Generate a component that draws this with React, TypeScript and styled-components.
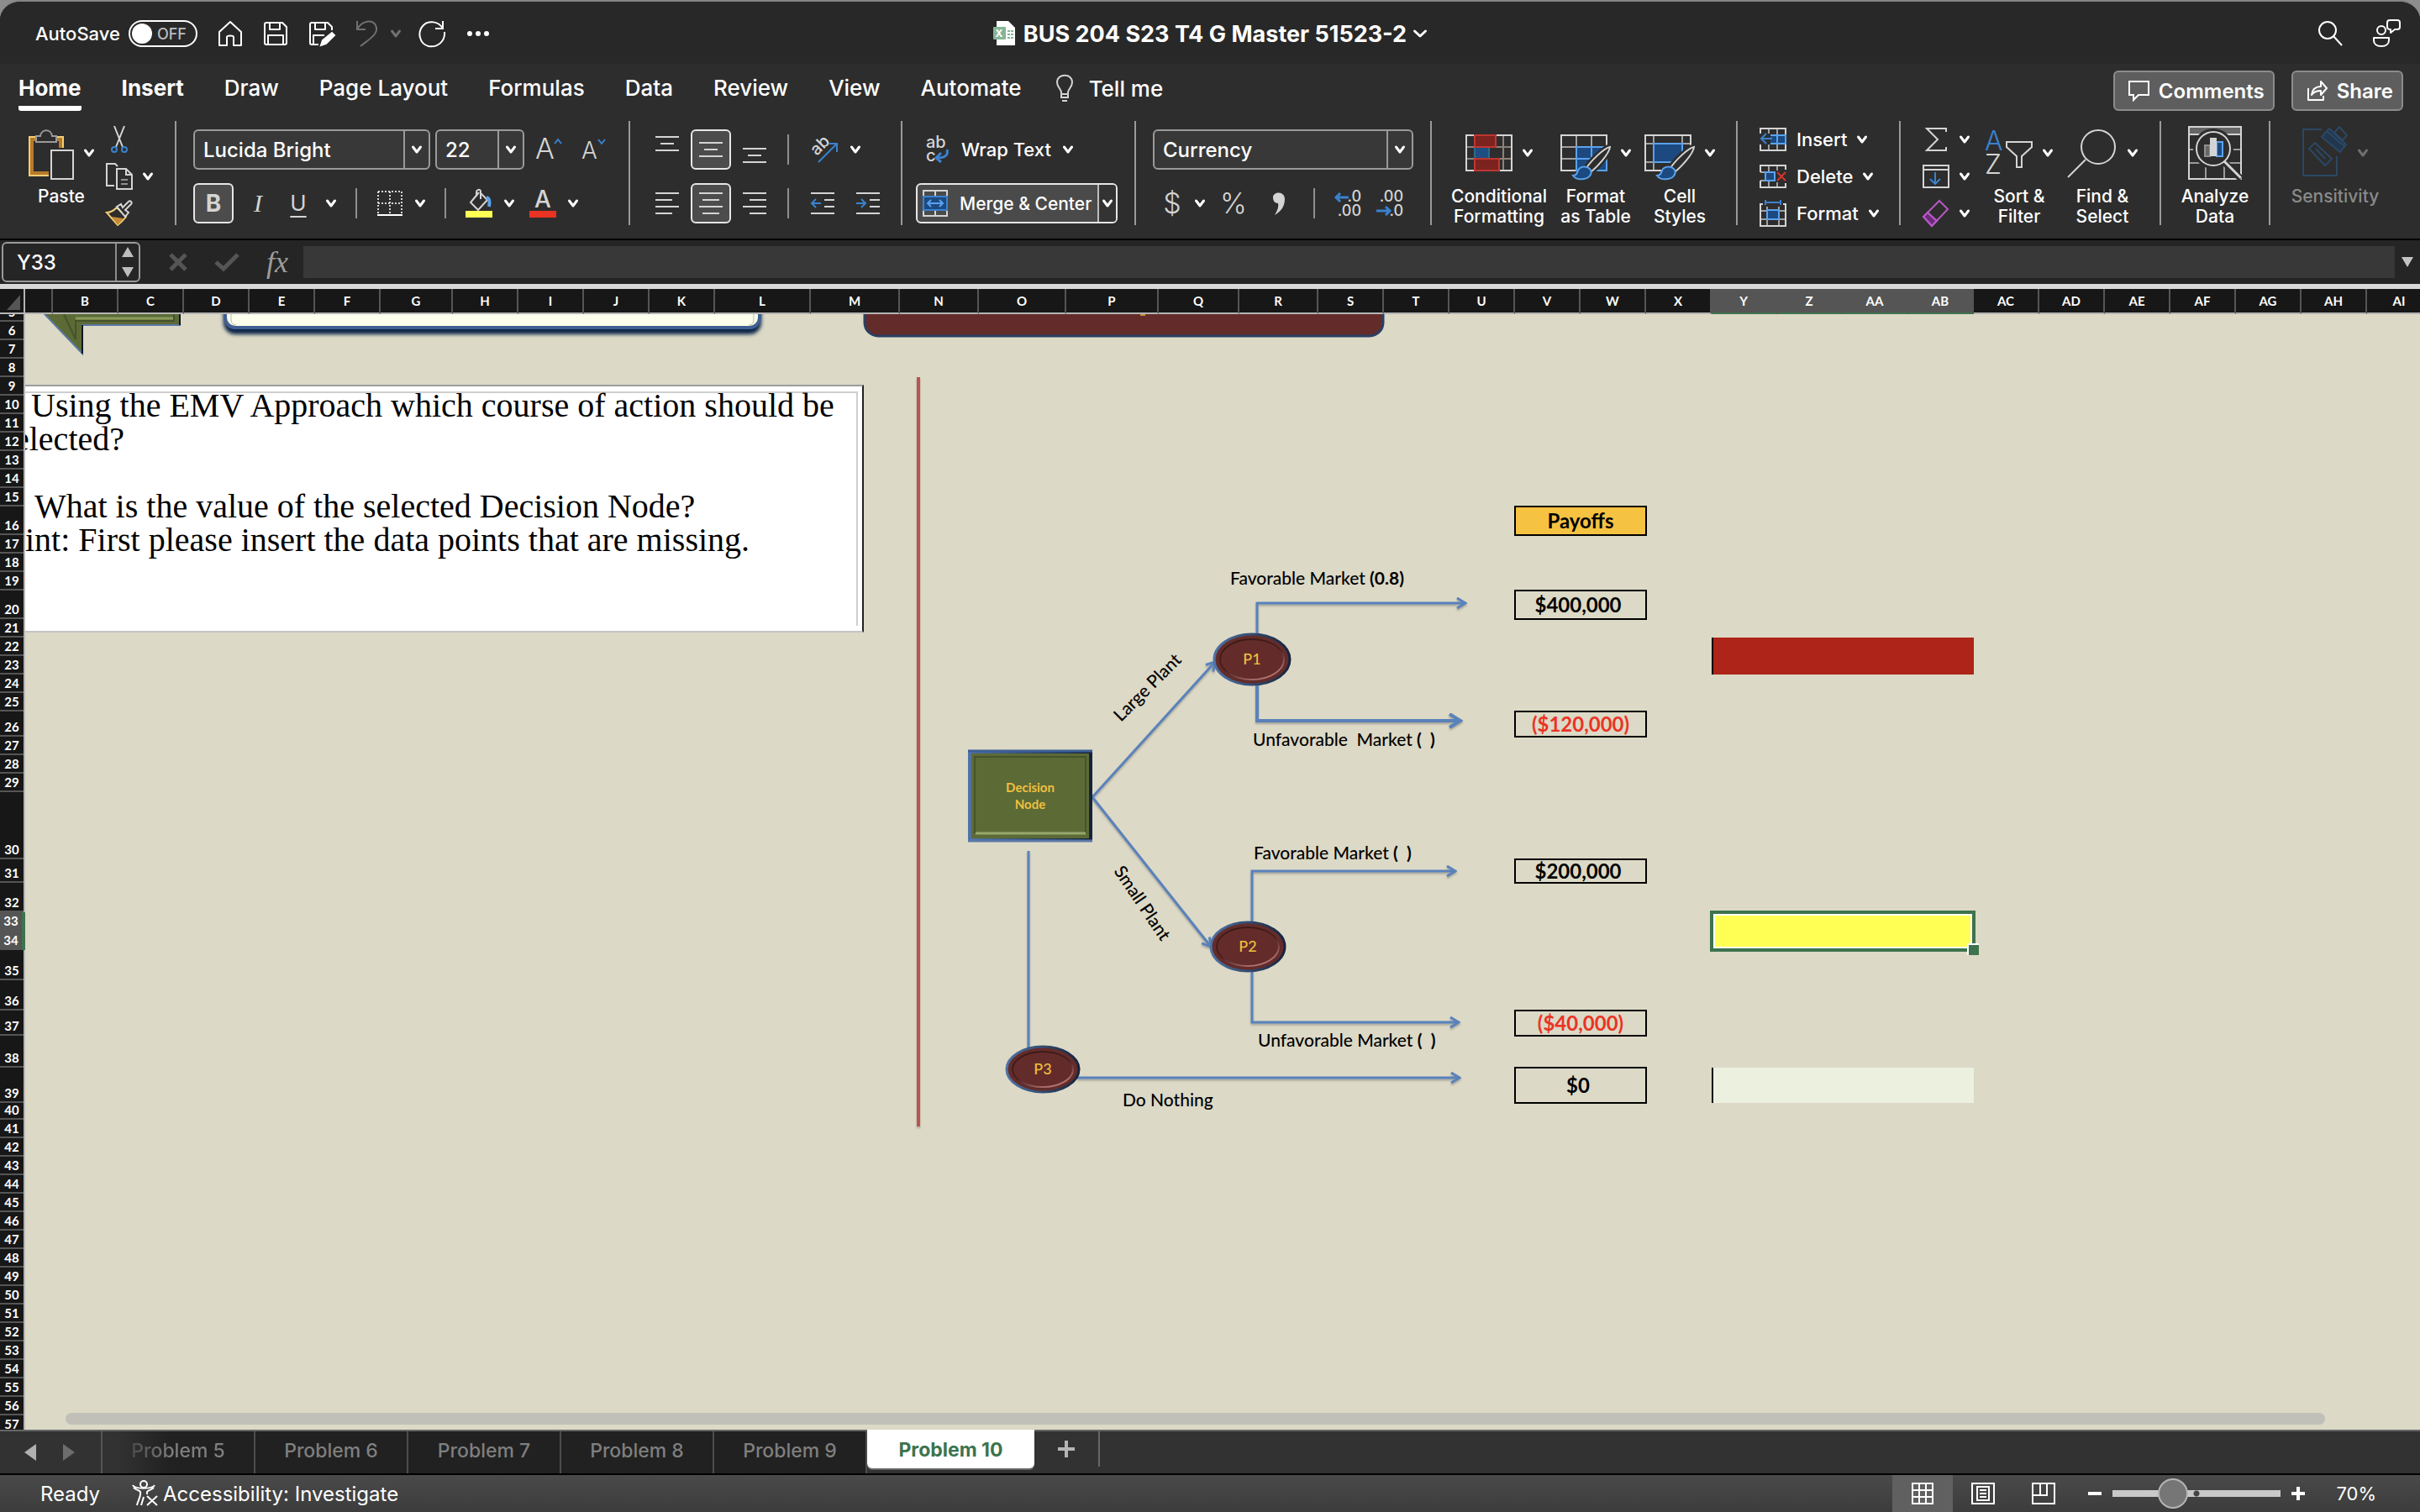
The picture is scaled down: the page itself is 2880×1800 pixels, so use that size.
import React from "react";
import styled, { createGlobalStyle, css } from "styled-components";

const ui = `Inter, "Liberation Sans", sans-serif`;
const sheetFont = `Lato, "Open Sans", sans-serif`;
const c = {
  bar: "#2d2d2d",
  line: "#d4d4d4",
  dim: "#8f8f8f",
  blue: "#3b82cf",
  light: "#5aa2ee",
  navy: "#1c4a80",
  green: "#3d734d",
  paper: "#dcd9c6",
  arrow: "#5a82bb",
};

const Global = createGlobalStyle`
  * { box-sizing: border-box; }
  html, body, #root { height: 100%; margin: 0; }
  body { background: #8d8d8d; font-family: ${ui}; color: #fff; overflow: hidden; }
  button, input, select { font: inherit; color: inherit; margin: 0; padding: 0; border: 0; background: none; }
  svg { display: block; flex: none; overflow: visible; }
`;

/* ---------- window and title bar ---------- */

const Window = styled.div`
  height: 100vh;
  display: flex;
  flex-direction: column;
  background: ${c.bar};
  border-top: 2px solid #848484;
  border-radius: 24px 24px 0 0;
  overflow: hidden;
`;
const TitleBar = styled.header`
  height: 74px;
  display: grid;
  grid-template-columns: 1fr auto 1fr;
  align-items: center;
  padding: 2px 22px 0;
  background: #282828;
`;
const TitleSide = styled.div<{ $end?: boolean }>`
  display: flex;
  align-items: center;
  gap: ${(p) => (p.$end ? 36 : 24)}px;
  padding-left: 20px;
  justify-content: ${(p) => (p.$end ? "flex-end" : "flex-start")};
`;
const AutoSave = styled.label`
  display: flex;
  align-items: center;
  gap: 10px;
  font-size: 22px;
  font-weight: 500;
`;
const Switch = styled.span`
  position: relative;
  display: flex;
  align-items: center;
  width: 82px;
  height: 32px;
  border: 2px solid #fff;
  border-radius: 16px;
  padding-left: 32px;
  font-size: 18px;
  color: #bdbdbd;
  &::before {
    content: "";
    position: absolute;
    left: 2px;
    top: 2px;
    width: 24px;
    height: 24px;
    border-radius: 50%;
    background: #fff;
  }
  input { position: absolute; inset: 0; opacity: 0; }
`;
const PlainButton = styled.button`
  display: flex;
  align-items: center;
`;
const UndoPair = styled.div`
  display: flex;
  align-items: center;
  gap: 14px;
  margin-right: -4px;
`;
const DocTitle = styled.h1`
  display: flex;
  align-items: center;
  gap: 8px;
  margin: 0;
  font-size: 27px;
  font-weight: 700;
`;

/* ---------- ribbon ---------- */

const TabStrip = styled.nav`
  height: 68px;
  display: flex;
  align-items: flex-start;
  gap: 48px;
  padding: 2px 20px 0 22px;
`;
const RibbonTab = styled.button<{ $active?: boolean; $strong?: boolean }>`
  height: 54px;
  padding-top: 4px;
  font-size: 26px;
  font-weight: ${(p) => (p.$strong ? 700 : 500)};
  border-bottom: 6px solid ${(p) => (p.$active ? "#fff" : "transparent")};
  border-radius: 3px;
  white-space: nowrap;
`;
const TellMe = styled.button`
  display: flex;
  align-items: center;
  gap: 18px;
  height: 54px;
  margin-left: -8px;
  font-size: 26px;
  font-weight: 500;
`;
const TabActions = styled.div`
  display: flex;
  gap: 20px;
  margin-left: auto;
  padding-top: 6px;
`;
const ActionButton = styled.button`
  display: flex;
  align-items: center;
  gap: 10px;
  height: 48px;
  padding: 0 10px 0 16px;
  border: 2px solid #8c8c8c;
  border-radius: 6px;
  background: #5e5e5e;
  font-size: 24px;
  font-weight: 600;
`;
const Ribbon = styled.section`
  display: flex;
  height: 142px;
  flex: none;
  border-bottom: 2px solid #000;
`;
const Group = styled.div<{ $w: number; $pad?: number; $last?: boolean }>`
  display: flex;
  flex: none;
  width: ${(p) => p.$w}px;
  height: 124px;
  padding-left: ${(p) => p.$pad ?? 20}px;
  border-right: ${(p) => (p.$last ? 0 : 2)}px solid #9a9a9a;
`;
const Rows = styled.div`
  display: flex;
  flex-direction: column;
  gap: 16px;
  padding-top: 10px;
`;
const ToolRow = styled.div<{ $gap?: number; $pad?: number }>`
  display: flex;
  align-items: center;
  height: 48px;
  gap: ${(p) => p.$gap ?? 18}px;
  padding-left: ${(p) => p.$pad ?? 0}px;
`;
const Tight = styled.div`
  display: flex;
  gap: 6px;
`;
const ThinSep = styled.i<{ $m?: number }>`
  width: 2px;
  height: 36px;
  margin: 0 ${(p) => p.$m ?? 5}px;
  background: ${c.dim};
`;
const Tool = styled.button<{ $on?: boolean }>`
  display: flex;
  align-items: center;
  justify-content: center;
  gap: 14px;
  flex: none;
  font-size: 22px;
  font-weight: 500;
  white-space: nowrap;
  ${(p) =>
    p.$on &&
    css`
      width: 48px;
      height: 48px;
      && { background: #4c4c4c; border: 2px solid #e6e6e6; }
      border-radius: 6px;
    `}
`;
const Glyph = styled.span<{ $w: number; $kind: "b" | "i" | "u" | "n" }>`
  width: ${(p) => p.$w}px;
  text-align: center;
  color: ${c.line};
  font-size: 28px;
  line-height: 32px;
  font-weight: ${(p) => (p.$kind === "b" ? 700 : 400)};
  ${(p) => p.$kind === "i" && css`font-family: "Liberation Serif", serif; font-style: italic; font-size: 30px;`}
  ${(p) => p.$kind === "u" && css`text-decoration: underline; text-underline-offset: 6px; text-decoration-thickness: 2px; font-size: 26px;`}
  ${(p) => p.$kind === "n" && css`font-size: 34px; font-weight: 300;`}
`;
const SelectBox = styled.label<{ $w: number }>`
  display: flex;
  width: ${(p) => p.$w}px;
  height: 48px;
  border: 2px solid #9a9a9a;
  border-radius: 6px;
  background: #383838;
  select {
    flex: 1;
    min-width: 0;
    appearance: none;
    padding-left: 10px;
    font-size: 24px;
    font-weight: 500;
    border-right: 2px solid #9a9a9a;
  }
  svg { margin: 16px 8px; }
`;
const MergeBox = styled.div`
  display: flex;
  width: 240px;
  height: 48px;
  border: 2px solid #e6e6e6;
  border-radius: 6px;
  background: #4a4a4a;
`;
const MergeMain = styled.button`
  display: flex;
  flex: 1;
  align-items: center;
  gap: 14px;
  padding-left: 6px;
  border-right: 2px solid #bdbdbd;
  font-size: 21px;
  font-weight: 500;
  white-space: nowrap;
`;
const MergeDrop = styled.button`
  width: 20px;
  display: flex;
  align-items: center;
  justify-content: center;
  && { background: #333; }
  border-radius: 0 4px 4px 0;
`;
const Big = styled.button<{ $w: number; $dim?: boolean }>`
  display: flex;
  flex-direction: column;
  align-items: center;
  gap: 8px;
  flex: none;
  width: ${(p) => p.$w}px;
  padding-top: 6px;
  font-size: 21px;
  font-weight: 500;
  line-height: 24px;
  color: ${(p) => (p.$dim ? "#8a8a8a" : "#fff")};
`;
const BigTop = styled.span`
  display: flex;
  align-items: center;
  gap: 12px;
  height: 64px;
`;
const Stack = styled.div<{ $side?: number }>`
  display: flex;
  flex-direction: column;
  gap: 12px;
  align-items: flex-start;
  padding: 6px ${(p) => p.$side ?? 0}px 0 0;
  button { height: 32px; gap: 12px; }
`;

/* ---------- formula bar ---------- */

const FormulaBar = styled.section`
  display: flex;
  align-items: center;
  height: 52px;
  flex: none;
  background: #252525;
`;
const NameBox = styled.label`
  display: flex;
  width: 165px;
  height: 48px;
  margin: 0 34px 0 2px;
  border: 2px solid #9a9a9a;
  border-radius: 6px;
  input {
    flex: 1;
    min-width: 0;
    padding-left: 16px;
    font-size: 24px;
    font-weight: 500;
    border-right: 2px solid #8c8c8c;
  }
  svg { margin: 4px 5px; }
`;
const FormulaButtons = styled.div`
  display: flex;
  align-items: center;
  gap: 32px;
  width: 160px;
  flex: none;
`;
const Fx = styled.span`
  font-family: "Liberation Serif", serif;
  font-style: italic;
  font-size: 36px;
  line-height: 40px;
  color: #9c9c9c;
`;
const FormulaInput = styled.input`
  flex: 1;
  height: 38px;
  && { background: #383838; }
`;
const Expand = styled.button`
  width: 30px;
  display: flex;
  justify-content: center;
`;

/* ---------- sheet ---------- */

const Sheet = styled.main`
  position: relative;
  flex: 1;
  min-height: 0;
  overflow: hidden;
  border-top: 6px solid #d8d8d8;
  background: ${c.paper};
  color: #000;
`;
const Grid = styled.table`
  table-layout: fixed;
  width: 0;
  border-spacing: 0;
  font-family: ${sheetFont};
  th, td { padding: 0; }
`;
const Corner = styled.td`
  background: #171717;
  border-right: 2px solid #b5b5b5;
  border-bottom: 2px solid #b5b5b5;
  svg { margin: 4px 0 0 8px; }
`;
const ColHead = styled.th<{ $on?: boolean }>`
  height: 30px;
  background: ${(p) => (p.$on ? "#555" : "#171717")};
  border-right: 2px solid #555;
  border-bottom: 2px solid ${(p) => (p.$on ? c.green : "#b5b5b5")};
  color: #fff;
  font-size: 15px;
  line-height: 28px;
`;
const RowHead = styled.th<{ $on?: boolean }>`
  background: ${(p) => (p.$on ? "#555" : "#171717")};
  border-right: ${(p) => (p.$on ? `4px solid ${c.green}` : "2px solid #b5b5b5")};
  color: #fff;
  vertical-align: bottom;
`;
const RowLabel = styled.div<{ $h: number }>`
  display: flex;
  flex-direction: column;
  justify-content: flex-end;
  height: ${(p) => p.$h}px;
  overflow: hidden;
  border-bottom: 2px solid #555;
  font-size: 15px;
  line-height: 20px;
  text-align: center;
`;
const Payoff = styled.td<{ $kind: "head" | "plus" | "minus" }>`
  outline: 2px solid #000;
  outline-offset: -1px;
  background: ${(p) => (p.$kind === "head" ? "#f5c242" : "transparent")};
  color: ${(p) => (p.$kind === "minus" ? "#eb3324" : "#000")};
  font-size: 24px;
  font-weight: 700;
  line-height: 28px;
  text-align: center;
  div { padding-right: ${(p) => (p.$kind === "plus" ? 6 : 0)}px; }
`;
const Band = styled.td<{ $bg: string }>`
  background: ${(p) => p.$bg};
  border-left: 2px solid #000;
`;
const Selected = styled.td`
  position: relative;
  background: #ffff54;
  outline: 4px solid ${c.green};
  outline-offset: -2px;
  box-shadow: inset 0 0 0 4px #fff;
  &::after {
    content: "";
    position: absolute;
    right: -6px;
    bottom: -6px;
    width: 12px;
    height: 12px;
    background: ${c.green};
    border: 2px solid #fff;
    border-width: 2px 0 0 2px;
    z-index: 1;
  }
`;
const Canvas = styled.div`
  position: absolute;
  inset: 30px 0 0 30px;
  overflow: hidden;
  pointer-events: none;
`;
const Drawing = styled.svg`
  position: absolute;
  left: 0;
  top: 0;
`;
const Question = styled.div`
  position: absolute;
  left: -46px;
  top: 84px;
  width: 1044px;
  height: 295px;
  padding-top: 3px;
  background: #fff;
  border: 2px solid #222;
  border-top-color: #9c9c9c;
  border-bottom-color: #c4c4c4;
  &::before {
    content: "";
    position: absolute;
    inset: 6px 5px 6px 0;
    border: 2px solid #cfcfcf;
    border-bottom: 0;
  }
`;
const QuestionLine = styled.p<{ $indent: number }>`
  position: relative;
  margin: 0;
  height: 40px;
  padding-left: ${(p) => p.$indent}px;
  font: 40px/40px "Liberation Serif", serif;
  white-space: pre;
`;
const ScrollThumb = styled.div`
  position: absolute;
  left: 78px;
  right: 113px;
  bottom: 6px;
  height: 14px;
  border-radius: 7px;
  background: #c1c0b8;
`;

/* ---------- bottom bars ---------- */

const SheetTabs = styled.nav`
  display: flex;
  height: 54px;
  flex: none;
  background: #323232;
  border-top: 2px solid #666;
  border-bottom: 2px solid #000;
`;
const TabArrows = styled.div`
  display: flex;
  gap: 32px;
  align-items: center;
  width: 122px;
  padding: 0 0 0 29px;
  border-right: 2px solid #555;
`;
const SheetTab = styled.button<{ $active?: boolean; $fade?: boolean }>`
  width: 182px;
  font-size: 23px;
  font-weight: 500;
  color: #7f7f7f;
  padding-bottom: 4px;
  && { background: #212121; border-right: 2px solid #4c4c4c; }
  ${(p) => p.$fade && css`&& { background: linear-gradient(90deg, #323232 10%, #212121 45%); }
    span { background: linear-gradient(90deg, #4a4a4a, #7f7f7f 45%); background-clip: text; color: transparent; }`}
  ${(p) =>
    p.$active &&
    css`
      && { background: #fff; border: 0; color: ${c.green}; }
      width: 199px;
      height: 46px;
      margin-top: -2px;
      padding: 2px 0 0;
      font-weight: 700;
      border-radius: 0 0 6px 6px;
      box-shadow: 0 2px 0 #666;
    `}
`;
const AddTab = styled.button`
  width: 78px;
  height: 42px;
  display: flex;
  align-items: center;
  justify-content: center;
  && { border-right: 2px solid #666; }
`;
const StatusBar = styled.footer`
  display: flex;
  align-items: stretch;
  height: 44px;
  flex: none;
  padding: 0 52px 0 48px;
  background: linear-gradient(#4a4a4a, #3c3c3c);
  font-size: 24px;
`;
const StatusText = styled.span`
  display: flex;
  align-items: center;
  width: 108px;
`;
const StatusButton = styled.button`
  display: flex;
  align-items: center;
  gap: 4px;
`;
const Views = styled.div`
  display: flex;
  margin-left: auto;
`;
const View = styled.button<{ $on?: boolean }>`
  width: 72px;
  display: flex;
  align-items: center;
  justify-content: center;
  ${(p) => p.$on && css`&& { background: #606060; }`}
`;
const Zoom = styled.div`
  display: flex;
  align-items: center;
  gap: 12px;
  width: 360px;
  padding-left: 16px;
  output { margin-left: auto; font-size: 22px; }
`;
const Slider = styled.input`
  appearance: none;
  width: 200px;
  height: 36px;
  && { background: radial-gradient(circle at 50% 50%, #444 0 3px, transparent 4px), linear-gradient(#c9c9c9, #c9c9c9) center / 100% 8px no-repeat; }
  &::-webkit-slider-thumb {
    appearance: none;
    width: 36px;
    height: 36px;
    border: 2px solid #b5b5b5;
    border-radius: 50%;
    background: #767676;
  }
`;

/* ---------- icons ---------- */

type IconProps = { w: number; h: number; sw?: number; color?: string; children: React.ReactNode };
const Icon = ({ w, h, sw = 2, color = c.line, children }: IconProps) => (
  <svg width={w} height={h} viewBox={`0 0 ${w} ${h}`} fill="none" stroke={color} strokeWidth={sw} aria-hidden="true">
    {children}
  </svg>
);
const Chevron = ({ color = "#fff", w = 12 }: { color?: string; w?: number }) => (
  <Icon w={w} h={12} sw={3} color={color}>
    <path d={`M1.5 3 L${w / 2} 9 L${w - 1.5} 3`} strokeLinecap="round" strokeLinejoin="round" />
  </Icon>
);
const Align = ({ lines, y = 0 }: { lines: [number, number][]; y?: number }) => (
  <Icon w={28} h={32}>
    {lines.map(([a, b], i) => (
      <path key={i} d={`M${a} ${y + i * 8}H${b}`} />
    ))}
  </Icon>
);
const PaintBrush = () => (
  <g>
    <path d="M59 25 C52 26 34 44 31 50 L37 54 C42 50 58 34 59 25Z" stroke={c.bar} strokeWidth="7" fill={c.bar} />
    <path d="M59 25 C52 26 36 42 31 50 L37 54 C42 50 58 34 59 25Z" fill={c.bar} />
    <path d="M15 59 C19 59 20 56 21 53 C23 48 31 47 35 51 C39 56 35 62 28 63 C22 64 17 62 15 59Z" fill={c.navy} stroke={c.light} />
  </g>
);
const PasteIcon = () => (
  <Icon w={54} h={64}>
    <path d="M1 13H41V26H36V18H6V54H24V59H1Z" fill="#b97a2b" stroke="none" />
    <path d="M24 59H1V13H41V26" stroke="#f3cf76" />
    <path d="M9 12H14C15 3 27 3 28 12H33V19H9Z" fill={c.bar} stroke="#9a9a9a" />
    <rect x="27" y="29" width="26" height="34" fill={c.bar} />
  </Icon>
);
const ScissorsIcon = () => (
  <Icon w={32} h={32}>
    <path d="M10 0L20 25M22 0L12 25" />
    <circle cx="10" cy="28" r="3" stroke={c.blue} />
    <circle cx="22" cy="28" r="3" stroke={c.blue} />
  </Icon>
);
const CopyIcon = () => (
  <Icon w={32} h={32}>
    <path d="M10 27H1V1H11L14 4" />
    <path d="M13 7H24L31 14V31H13ZM24 7V14H31" />
    <path d="M18 20H26M18 25H26" stroke={c.dim} />
  </Icon>
);
const FormatBrushIcon = () => (
  <Icon w={32} h={32}>
    <path d="M1 15C6 15 10 12 13 9L24 20C21 24 18 27 14 30Z" stroke="#f3cf76" />
    <path d="M7 20L21 22L14 30Z" fill="#c98a35" stroke="none" />
    <path d="M13 8L18 5L20 9L27 2C29 0 32 3 30 5L23 12L27 15L23 20Z" fill={c.bar} />
  </Icon>
);
const BordersIcon = () => (
  <Icon w={32} h={32}>
    <path d="M2 2H30M2 16H30M2 2V28M16 2V28M30 2V28" strokeDasharray="2 2" />
    <path d="M1 30H31" stroke="#fff" />
  </Icon>
);
const FillIcon = () => (
  <Icon w={32} h={34}>
    <path d="M16 4L6 16L15 25L26 13L18 5M18 12V3C18 0 13 0 13 4V9" />
    <path d="M25 10C29 11 29 16 28 21" stroke={c.light} strokeWidth="4" />
    <rect x="0" y="26" width="32" height="8" fill="#ffff54" stroke="none" />
  </Icon>
);
const FontColorIcon = () => (
  <Icon w={32} h={34}>
    <text x="16" y="22" textAnchor="middle" fontFamily="Inter" fontSize="28" fill={c.line} stroke="none">A</text>
    <rect x="0" y="26" width="32" height="8" fill="#e93323" stroke="none" />
  </Icon>
);
const SizeIcon = ({ up, w }: { up?: boolean; w: number }) => (
  <Icon w={w} h={32} color={c.blue} sw={2}>
    <text x={up ? -1 : 8} y="27" fontFamily="Inter" fontSize={up ? 34 : 28} fontWeight="300" fill={c.line} stroke="none">A</text>
    <path d={up ? "M22 9L26 4L30 9" : "M28 4L32 9L36 4"} />
  </Icon>
);
const OrientationIcon = () => (
  <Icon w={34} h={32} color={c.blue}>
    <text x="8" y="24" transform="rotate(-45 8 24)" fontFamily="Inter" fontSize="20" fill={c.line} stroke="none">ab</text>
    <path d="M10 31L32 9M22 9H32V19" />
  </Icon>
);
const IndentIcon = ({ out }: { out?: boolean }) => (
  <Icon w={out ? 40 : 28} h={32}>
    <path d="M1 4H29M17 12H29M17 20H29M1 28H29" />
    <path d={out ? "M2 16H13M7 11L2 16L7 21" : "M1 16H12M7 11L12 16L7 21"} stroke={c.blue} />
  </Icon>
);
const WrapIcon = () => (
  <Icon w={28} h={34} color={c.blue} sw={3}>
    <text x="0" y="15" fontFamily="Inter" fontSize="20" fill={c.line} stroke="none">ab</text>
    <text x="0" y="31" fontFamily="Inter" fontSize="20" fill={c.line} stroke="none">c</text>
    <path d="M25 17C27 24 22 27 13 27M18 21L12 27L18 32" />
  </Icon>
);
const MergeIcon = () => (
  <Icon w={30} h={32}>
    <path d="M1 7V1H29V7M15 1V7M1 25V31H29V25M15 25V31" />
    <rect x="1" y="8" width="28" height="16" fill={c.navy} stroke={c.blue} />
    <path d="M6 16H24M10 12L6 16L10 20M20 12L24 16L20 20" stroke={c.light} />
  </Icon>
);
const DecimalIcon = ({ more }: { more?: boolean }) => (
  <Icon w={32} h={34} color={c.blue} sw={3}>
    <text x="32" y="15" textAnchor="end" fontFamily="Inter" fontSize="18" fill={c.line} stroke="none">{more ? ".0" : ".00"}</text>
    <text x="32" y="32" textAnchor="end" fontFamily="Inter" fontSize="18" fill={c.line} stroke="none">{more ? ".00" : ".0"}</text>
    <path d={more ? "M17 10H2M7 5L2 10L7 15" : "M0 26H16M11 21L16 26L11 31"} />
  </Icon>
);
const ConditionalIcon = () => (
  <Icon w={56} h={64}>
    <path d="M11 11V53M45 11V53M1 25H55M1 39H55" stroke="#8d817a" />
    <rect x="1" y="11" width="54" height="42" />
    <rect x="29" y="26" width="15" height="12" fill={c.bar} stroke="none" />
    <rect x="11" y="25" width="17" height="14" fill="#1f4e82" stroke="#2f6a8f" />
    <rect x="11" y="11" width="25" height="14" fill="#7c2320" stroke="#bf3630" />
    <rect x="11" y="39" width="29" height="14" fill="#7c2320" stroke="#bf3630" />
  </Icon>
);
const TableIcon = () => (
  <Icon w={60} h={64}>
    <path d="M19 11V53M37 11V25M1 25H19M1 39H19" stroke="#a0a0a0" />
    <path d="M55 25V11H1V53H19" />
    <path d="M19 25H55V53H19ZM37 25V53M19 39H55" fill={c.navy} stroke={c.light} />
    <PaintBrush />
  </Icon>
);
const CellStylesIcon = () => (
  <Icon w={60} h={64}>
    <path d="M11 11V53M45 11V21M1 21H55M1 43H11" stroke="#a0a0a0" />
    <path d="M55 25V11H1V53H20" />
    <rect x="11" y="21" width="34" height="22" fill={c.navy} stroke={c.light} />
    <PaintBrush />
  </Icon>
);
const InsertIcon = () => (
  <Icon w={32} h={32}>
    <path d="M11 3V29M21 3V29M1 11H31M1 21H31" stroke="#a0a0a0" />
    <path d="M1 9V3H31V29H1V22" />
    <path d="M0 9H14V22H0Z" fill={c.bar} stroke="none" />
    <path d="M13 11H31V21H13M21 11V21" fill={c.navy} stroke={c.light} />
    <path d="M2 15H15M8 9L2 15L8 21" stroke={c.blue} />
  </Icon>
);
const DeleteIcon = () => (
  <Icon w={32} h={32}>
    <path d="M11 3V29M21 3V9M21 23V29M1 11H7M1 21H7" stroke="#a0a0a0" />
    <path d="M1 11V3H31V8M1 21V29H31V24" />
    <rect x="7" y="11" width="11" height="10" fill={c.navy} stroke={c.light} />
    <path d="M21 11L31 21M31 11L21 21" stroke="#d9352b" />
  </Icon>
);
const FormatIcon = () => (
  <Icon w={32} h={32}>
    <path d="M9 8V31M23 8V31M1 13H31M1 23H31" stroke="#a0a0a0" />
    <path d="M4 5H1V31H31V5H28" />
    <rect x="9" y="12" width="14" height="11" fill={c.navy} stroke={c.light} />
    <path d="M7 3H25M7 0V6M25 0V6" stroke={c.blue} />
  </Icon>
);
const SigmaIcon = () => (
  <Icon w={32} h={32}><path d="M28 7V3H5L18 16L5 29H28V25" /></Icon>
);
const FillDownIcon = () => (
  <Icon w={32} h={32}>
    <path d="M1 3H31V29H1ZM1 8H31" />
    <path d="M15 11V25M9 19L15 25L21 19" stroke={c.blue} />
  </Icon>
);
const EraserIcon = () => (
  <Icon w={32} h={32} color="#b658c4">
    <path d="M6 15L17 25L11 31L1 20Z" fill="#6c2a78" />
    <path d="M20 1L30 11L11 31L1 20ZM6 15L17 25" />
  </Icon>
);
const SortIcon = () => (
  <Icon w={56} h={64}>
    <text x="-1" y="29" fontFamily="Inter" fontSize="32" fontWeight="300" fill={c.blue} stroke="none">A</text>
    <text x="-1" y="57" fontFamily="Inter" fontSize="32" fontWeight="300" fill={c.line} stroke="none">Z</text>
    <path d="M25 19H55V25L43 36V49H37V36L25 25Z" />
  </Icon>
);
const FindIcon = () => (
  <Icon w={60} h={64}>
    <circle cx="37" cy="25" r="20" />
    <path d="M22 40L1 61" />
  </Icon>
);
const AnalyzeIcon = () => (
  <Icon w={64} h={64}>
    <rect x="2" y="2" width="60" height="8" fill="#666" stroke="none" />
    <path d="M1 28H63M1 44H63M21 48V63M43 48V63" stroke="#9a9a9a" />
    <path d="M1 1H63V63H1ZM1 10H63" />
    <circle cx="30" cy="27" r="24" fill={c.bar} stroke="none" />
    <path d="M42 42L63 63" stroke={c.bar} strokeWidth="8" />
    <circle cx="30" cy="27" r="20" />
    <path d="M43 42L63 62" strokeWidth="3" />
    <rect x="20" y="23" width="6" height="13" fill="#666" stroke="#8f8f8f" />
    <rect x="34" y="19" width="7" height="17" fill={c.navy} stroke={c.light} />
    <rect x="26" y="14" width="8" height="22" fill={c.line} stroke="none" />
  </Icon>
);
const SensitivityIcon = () => (
  <Icon w={54} h={64} color="#2b4865">
    <path d="M23 4H1V59H41V36" />
    <path d="M15 20L8 27L27 47L35 39ZM16 27L27 39" />
    <path d="M32 3L23 13L45 31L52 22ZM30 7L50 24" fill="#22374d" />
    <path d="M38 8L44 1L53 11L48 17Z" />
  </Icon>
);

/* ---------- sheet data ---------- */

const columns: [string, number][] = [
  ["", 33], ["B", 78], ["C", 78], ["D", 78], ["E", 78], ["F", 78], ["G", 86], ["H", 78], ["I", 78], ["J", 78],
  ["K", 78], ["L", 114], ["M", 106], ["N", 94], ["O", 104], ["P", 110], ["Q", 96], ["R", 94], ["S", 78], ["T", 78],
  ["U", 78], ["V", 78], ["W", 78], ["X", 78], ["Y", 78], ["Z", 78], ["AA", 78], ["AB", 78], ["AC", 78], ["AD", 78],
  ["AE", 78], ["AF", 78], ["AG", 78], ["AH", 78], ["AI", 78],
];
const heights: Record<number, number> = {
  5: 9, 16: 34, 20: 34, 26: 30, 30: 80, 31: 28, 32: 35, 34: 23, 35: 36, 36: 36, 37: 30, 38: 38, 39: 42, 40: 20,
};
const rows = Array.from({ length: 53 }, (_, i) => i + 5);
const payoffs: Record<number, { text: string; kind: "head" | "plus" | "minus" }> = {
  16: { text: "Payoffs", kind: "head" },
  20: { text: "$400,000", kind: "plus" },
  26: { text: "($120,000)", kind: "minus" },
  31: { text: "$200,000", kind: "plus" },
  37: { text: "($40,000)", kind: "minus" },
  39: { text: "$0", kind: "plus" },
};
const bands: Record<number, { bg: string; span: number }> = {
  22: { bg: "#ae2418", span: 2 },
  33: { bg: "", span: 2 },
  39: { bg: "#ecf0df", span: 1 },
};
const selectedCols = ["Y", "Z", "AA", "AB"];

const SheetRow = ({ n }: { n: number }) => {
  const on = n === 33 || n === 34;
  const payoff = payoffs[n];
  const band = bands[n];
  const covered = n === 23 || n === 34;
  return (
    <tr>
      <RowHead scope="row" $on={on}>
        <RowLabel $h={heights[n] ?? 22}>{n}</RowLabel>
      </RowHead>
      <td colSpan={21} />
      {payoff ? (
        <Payoff colSpan={2} $kind={payoff.kind}><div>{payoff.text}</div></Payoff>
      ) : (
        <td colSpan={2} />
      )}
      <td />
      {band && !band.bg && <Selected colSpan={4} rowSpan={band.span} />}
      {band && band.bg && <Band colSpan={4} rowSpan={band.span} $bg={band.bg} />}
      {!band && !covered && <td colSpan={4} />}
      <td colSpan={7} />
    </tr>
  );
};

/* ---------- decision tree ---------- */

const nodes = [
  { name: "P1", x: 1490, y: 785, rx: 45, ry: 30 },
  { name: "P2", x: 1485, y: 1127, rx: 44, ry: 29 },
  { name: "P3", x: 1241, y: 1273, rx: 43, ry: 27 },
];
const Tree = () => (
  <Drawing width="2850" height="1330" viewBox="30 374 2850 1330" fill="none" fontFamily="Lato">
    <defs>
      <marker id="tip" viewBox="0 0 14 14" refX="12" refY="7" markerWidth="14" markerHeight="14" markerUnits="userSpaceOnUse" orient="auto">
        <path d="M2 1L12 7L2 13" fill="none" stroke={c.arrow} strokeWidth="3" />
      </marker>
      <marker id="bigTip" viewBox="0 0 18 18" refX="15" refY="9" markerWidth="18" markerHeight="18" markerUnits="userSpaceOnUse" orient="auto">
        <path d="M2 1L15 9L2 17" fill="none" stroke={c.arrow} strokeWidth="4" />
      </marker>
      <filter id="drop" filterUnits="userSpaceOnUse" x="1000" y="374" width="900" height="1200">
        <feDropShadow dx="0" dy="2" stdDeviation="1" floodColor="#555" floodOpacity="0.4" />
      </filter>
      <filter id="deep" x="-5%" y="-20%" width="110%" height="180%">
        <feDropShadow dx="0" dy="6" stdDeviation="2" floodColor="#10264a" floodOpacity="1" />
      </filter>
      <linearGradient id="rim" x1="0" y1="0" x2="1" y2="0">
        <stop offset="0" stopColor="#4f73a5" />
        <stop offset="1" stopColor="#16233c" />
      </linearGradient>
      <linearGradient id="bevel" x1="0" y1="0" x2="0.6" y2="1">
        <stop offset="0" stopColor="#3a1816" />
        <stop offset="0.6" stopColor="#4a1f1d" />
        <stop offset="1" stopColor="#b07370" />
      </linearGradient>
    </defs>

    <path d="M53 374L50 366H214V387H98V421Z" fill="#5c6b36" stroke="#5b78a6" strokeWidth="2" />
    <path d="M98 387V421M214 374V387" stroke="#101820" strokeWidth="2" />
    <path d="M76 374L90 404V382H207V374" stroke="#46532a" strokeWidth="2" />
    <path d="M90 379H206" stroke="#8a9c5c" strokeWidth="3" />
    <rect x="268" y="340" width="636" height="50" rx="12" fill="#fbfeec" stroke="#3f5f92" strokeWidth="4" filter="url(#deep)" />
    <path d="M275 374V380Q275 387 281 387M897 374V380Q897 387 891 387" stroke="#b9bda6" strokeWidth="1" />
    <rect x="1029" y="340" width="617" height="60" rx="16" fill="#632c2a" stroke="#2a3f63" strokeWidth="3" />
    <path d="M1357 375H1363" stroke="#c98f3a" strokeWidth="2" />
    <path d="M1093 449V1341" stroke="#b85450" strokeWidth="4" filter="url(#drop)" />

    <g stroke={c.arrow} strokeWidth="3" filter="url(#drop)">
      <path d="M1300 949L1446 788" markerEnd="url(#tip)" />
      <path d="M1300 949L1441 1127" markerEnd="url(#tip)" />
      <path d="M1496 756V718H1744" markerEnd="url(#tip)" />
      <path d="M1496 814V858H1738" strokeWidth="4" markerEnd="url(#bigTip)" />
      <path d="M1490 1099V1037H1732" markerEnd="url(#tip)" />
      <path d="M1490 1156V1217H1736" markerEnd="url(#tip)" />
      <path d="M1282 1283H1737" markerEnd="url(#tip)" />
      <path d="M1224 1013V1248" />
    </g>

    <rect x="1154" y="895" width="144" height="105" fill="#5c6b36" stroke="url(#rim)" strokeWidth="4" />
    <path d="M1152 894H1300" stroke="#3d5f96" strokeWidth="3" />
    <path d="M1152 1001H1300" stroke="#5b78a6" strokeWidth="3" />
    <path d="M1160 992V901H1292V992" stroke="#46532a" strokeWidth="2" />
    <path d="M1161 992H1292" stroke="#98a86c" strokeWidth="3" />
    <g fill="#f0bf3f" fontSize="15" fontWeight="700" textAnchor="middle">
      <text x="1226" y="943">Decision</text>
      <text x="1226" y="963">Node</text>
    </g>

    {nodes.map((n) => (
      <g key={n.name}>
        <ellipse cx={n.x} cy={n.y} rx={n.rx} ry={n.ry} fill="#632c2a" stroke="url(#rim)" strokeWidth="3" />
        <ellipse cx={n.x} cy={n.y} rx={n.rx - 7} ry={n.ry - 6} stroke="url(#bevel)" strokeWidth="2" />
        <text x={n.x} y={n.y + 6} fontSize="18" textAnchor="middle" fill="#f0bf3f" fontWeight="500">{n.name}</text>
      </g>
    ))}

    <g fill="#000" fontSize="21" fontWeight="500">
      <text x="1464" y="696">Favorable Market <tspan fontWeight="700">(0.8)</tspan></text>
      <text x="1491" y="888">Unfavorable{"\u00a0 "}Market <tspan fontWeight="700">({"\u00a0\u00a0"})</tspan></text>
      <text x="1492" y="1023">Favorable Market <tspan fontWeight="700">({"\u00a0\u00a0"})</tspan></text>
      <text x="1497" y="1246">Unfavorable Market <tspan fontWeight="700">({"\u00a0\u00a0"})</tspan></text>
      <text x="1336" y="1317">Do Nothing</text>
      <text x="1334" y="860" transform="rotate(-45 1334 860)">Large Plant</text>
      <text x="1325" y="1037" transform="rotate(56 1325 1037)">Small Plant</text>
    </g>
  </Drawing>
);

const ribbonTabs = ["Home", "Insert", "Draw", "Page Layout", "Formulas", "Data", "Review", "View", "Automate"];

const Picker = ({ label, value, w }: { label: string; value: string; w: number }) => (
  <SelectBox $w={w}>
    <select aria-label={label} defaultValue={value}><option>{value}</option></select>
    <Chevron />
  </SelectBox>
);

export default function App() {
  return (
    <Window>
      <Global />
      <TitleBar>
        <TitleSide>
          <AutoSave>
            AutoSave
            <Switch>OFF<input type="checkbox" role="switch" aria-label="AutoSave" /></Switch>
          </AutoSave>
          <PlainButton aria-label="Home">
            <Icon w={30} h={32} color="#fff"><path d="M2 14L15 2L28 14V30H19V20C19 18 11 18 11 20V30H2Z" strokeLinejoin="round" /></Icon>
          </PlainButton>
          <PlainButton aria-label="Save">
            <Icon w={30} h={32} color="#fff"><path d="M2 5Q2 3 4 3H23L28 8V27Q28 29 26 29H4Q2 29 2 27ZM8 3V11H20V3M6 29V18H24V29" strokeLinejoin="round" /></Icon>
          </PlainButton>
          <PlainButton aria-label="Save as">
            <Icon w={32} h={32} color="#fff">
              <path d="M12 29H4Q2 29 2 27V5Q2 3 4 3H23L28 8V12M8 3V11H20V3M6 29V18H19" strokeLinejoin="round" />
              <path d="M15 30L17 24L28 15L31 18L21 28Z" fill="#fff" />
            </Icon>
          </PlainButton>
          <UndoPair>
            <PlainButton aria-label="Undo">
              <Icon w={28} h={34} color="#707070"><path d="M2 2V12H12M2 12C8 1 20 0 24 7C29 17 16 24 6 32" /></Icon>
            </PlainButton>
            <PlainButton aria-label="Undo history"><Chevron color="#707070" /></PlainButton>
          </UndoPair>
          <PlainButton aria-label="Redo">
            <Icon w={34} h={34} color="#fff"><path d="M30 2V11H21M30 11C25 2 13 1 7 7C-1 15 2 29 13 32C24 34 33 26 32 15" /></Icon>
          </PlainButton>
          <PlainButton aria-label="More">
            <Icon w={28} h={8} color="none"><g fill="#fff"><circle cx="4" cy="4" r="3" /><circle cx="14" cy="4" r="3" /><circle cx="24" cy="4" r="3" /></g></Icon>
          </PlainButton>
        </TitleSide>
        <DocTitle>
          <Icon w={28} h={32} color="none">
            <path d="M4 1H18L26 9V30H4Z" fill="#fff" />
            <rect x="0" y="8" width="15" height="15" rx="1" fill="#86b596" />
            <text x="7" y="20" textAnchor="middle" fontSize="12" fontWeight="700" fill="#fff">X</text>
            <path d="M17 12H20V14H17ZM21 12H24V14H21ZM17 16H20V18H17ZM21 16H24V18H21ZM17 20H20V22H17ZM21 20H24V22H21Z" fill="#86b596" />
          </Icon>
          BUS 204 S23 T4 G Master 51523-2
          <Chevron w={16} />
        </DocTitle>
        <TitleSide $end>
          <PlainButton aria-label="Search">
            <Icon w={30} h={32} color="#fff"><circle cx="12" cy="12" r="10" /><path d="M19 19L29 30" /></Icon>
          </PlainButton>
          <PlainButton aria-label="Collaborators">
            <Icon w={34} h={34} color="#fff">
              <circle cx="10" cy="13" r="5" />
              <path d="M1 22H19V25C19 29 16 32 10 32C4 32 1 29 1 25ZM20 1H29Q32 1 32 4V9Q32 12 29 12H26L21 16V12Q17 12 17 9V4Q17 1 20 1Z" strokeLinejoin="round" />
            </Icon>
          </PlainButton>
        </TitleSide>
      </TitleBar>

      <TabStrip>
        {ribbonTabs.map((t, i) => (
          <RibbonTab key={t} $active={i === 0} $strong={i < 2}>{t}</RibbonTab>
        ))}
        <TellMe>
          <Icon w={22} h={32}><path d="M7 21C7 17 2 15 2 9C2 -2 20 -2 20 9C20 15 15 17 15 21V27H7ZM7 23H15M8 31H14" /></Icon>
          Tell me
        </TellMe>
        <TabActions>
          <ActionButton>
            <Icon w={26} h={26} color="#fff"><path d="M1 2H24V18H12L6 24V18H1Z" /></Icon>
            Comments
          </ActionButton>
          <ActionButton>
            <Icon w={26} h={26} color="#fff"><path d="M2 10V24H20V19M6 18C7 11 11 8 17 8V2L24 10L17 18V13C12 13 9 14 6 18Z" strokeLinejoin="round" /></Icon>
            Share
          </ActionButton>
        </TabActions>
      </TabStrip>

      <Ribbon>
        <Group $w={210}>
          <Big $w={106}><BigTop><PasteIcon /><Chevron /></BigTop>Paste</Big>
          <Stack>
            <Tool aria-label="Cut"><ScissorsIcon /></Tool>
            <Tool aria-label="Copy"><CopyIcon /><Chevron /></Tool>
            <Tool aria-label="Format painter"><FormatBrushIcon /></Tool>
          </Stack>
        </Group>

        <Group $w={540}>
          <Rows>
            <ToolRow $gap={14}>
              <Tight>
                <Picker label="Font" value="Lucida Bright" w={282} />
                <Picker label="Font size" value="22" w={106} />
              </Tight>
              <Tool aria-label="Increase font size"><SizeIcon up w={32} /></Tool>
              <Tool aria-label="Decrease font size"><SizeIcon w={44} /></Tool>
            </ToolRow>
            <ToolRow>
              <Tool $on aria-label="Bold"><Glyph $w={30} $kind="b">B</Glyph></Tool>
              <Tool aria-label="Italic"><Glyph $w={22} $kind="i">I</Glyph></Tool>
              <Tool aria-label="Underline"><Glyph $w={38} $kind="u">U</Glyph><Chevron /></Tool>
              <ThinSep />
              <Tool aria-label="Borders"><BordersIcon /><Chevron /></Tool>
              <ThinSep />
              <Tool aria-label="Fill color"><FillIcon /><Chevron /></Tool>
              <Tool aria-label="Font color"><FontColorIcon /><Chevron /></Tool>
            </ToolRow>
          </Rows>
        </Group>

        <Group $w={324} $pad={30}>
          <Rows>
            <ToolRow $gap={14}>
              <Tool aria-label="Align top"><Align lines={[[0, 28], [6, 22], [0, 28]]} y={1} /></Tool>
              <Tool $on aria-label="Align middle"><Align lines={[[0, 28], [6, 22], [0, 28]]} y={8} /></Tool>
              <Tool aria-label="Align bottom"><Align lines={[[0, 28], [6, 22], [0, 28]]} y={15} /></Tool>
              <ThinSep $m={11} />
              <Tool aria-label="Orientation"><OrientationIcon /><Chevron /></Tool>
            </ToolRow>
            <ToolRow $gap={14}>
              <Tool aria-label="Align left"><Align lines={[[0, 28], [0, 20], [0, 28], [0, 20]]} y={4} /></Tool>
              <Tool $on aria-label="Center"><Align lines={[[0, 28], [4, 24], [0, 28], [4, 24]]} y={4} /></Tool>
              <Tool aria-label="Align right"><Align lines={[[0, 28], [8, 28], [0, 28], [8, 28]]} y={4} /></Tool>
              <ThinSep $m={11} />
              <Tool aria-label="Decrease indent"><IndentIcon out /></Tool>
              <Tool aria-label="Increase indent"><IndentIcon /></Tool>
            </ToolRow>
          </Rows>
        </Group>

        <Group $w={278} $pad={16}>
          <Rows>
            <ToolRow $pad={12}>
              <Tool><WrapIcon />Wrap Text<Chevron /></Tool>
            </ToolRow>
            <MergeBox>
              <MergeMain><MergeIcon />Merge &amp; Center</MergeMain>
              <MergeDrop aria-label="Merge options"><Chevron /></MergeDrop>
            </MergeBox>
          </Rows>
        </Group>

        <Group $w={352}>
          <Rows>
            <Picker label="Number format" value="Currency" w={310} />
            <ToolRow $pad={10}>
              <Tool aria-label="Accounting format"><Glyph $w={26} $kind="n">$</Glyph><Chevron /></Tool>
              <Tool aria-label="Percent style"><Glyph $w={32} $kind="n">%</Glyph></Tool>
              <Tool aria-label="Comma style">
                <Icon w={38} h={32} color="none"><path d="M13 9C13 2 27 1 27 11C27 20 22 26 15 30C18 25 20 21 19 16C15 16 13 13 13 9Z" fill={c.line} /></Icon>
              </Tool>
              <ThinSep />
              <Tool aria-label="Increase decimal"><DecimalIcon more /></Tool>
              <Tool aria-label="Decrease decimal"><DecimalIcon /></Tool>
            </ToolRow>
          </Rows>
        </Group>

        <Group $w={364}>
          <Big $w={120}><BigTop><ConditionalIcon /><Chevron /></BigTop><span>Conditional<br />Formatting</span></Big>
          <Big $w={110}><BigTop><TableIcon /><Chevron /></BigTop><span>Format<br />as Table</span></Big>
          <Big $w={90}><BigTop><CellStylesIcon /><Chevron /></BigTop><span>Cell<br />Styles</span></Big>
        </Group>

        <Group $w={194} $pad={26}>
          <Stack>
            <Tool><InsertIcon />Insert<Chevron /></Tool>
            <Tool><DeleteIcon />Delete<Chevron /></Tool>
            <Tool><FormatIcon />Format<Chevron /></Tool>
          </Stack>
        </Group>

        <Group $w={310} $pad={26}>
          <Stack $side={10}>
            <Tool aria-label="AutoSum"><SigmaIcon /><Chevron /></Tool>
            <Tool aria-label="Fill"><FillDownIcon /><Chevron /></Tool>
            <Tool aria-label="Clear"><EraserIcon /><Chevron /></Tool>
          </Stack>
          <Big $w={98}><BigTop><SortIcon /><Chevron /></BigTop><span>Sort &amp;<br />Filter</span></Big>
          <Big $w={100}><BigTop><FindIcon /><Chevron /></BigTop><span>Find &amp;<br />Select</span></Big>
        </Group>

        <Group $w={130} $pad={0}>
          <Big $w={128}><BigTop><AnalyzeIcon /></BigTop><span>Analyze<br />Data</span></Big>
        </Group>

        <Group $w={160} $pad={0} $last>
          <Big $w={154} $dim><BigTop><SensitivityIcon /><Chevron color="#6f6f6f" /></BigTop>Sensitivity</Big>
        </Group>
      </Ribbon>

      <FormulaBar>
        <NameBox>
          <input aria-label="Name box" defaultValue="Y33" />
          <Icon w={16} h={36} color="none"><path d="M8 0L15 12H1ZM1 24H15L8 36Z" fill="#bdbdbd" /></Icon>
        </NameBox>
        <FormulaButtons>
          <PlainButton aria-label="Cancel"><Icon w={22} h={22} sw={5} color="#555"><path d="M2 2L20 20M20 2L2 20" /></Icon></PlainButton>
          <PlainButton aria-label="Enter"><Icon w={30} h={22} sw={5} color="#555"><path d="M2 11L11 19L28 2" /></Icon></PlainButton>
          <Fx>fx</Fx>
        </FormulaButtons>
        <FormulaInput aria-label="Formula" />
        <Expand aria-label="Expand formula bar"><Icon w={14} h={14} color="none"><path d="M0 1H14L7 13Z" fill="#c4c4c4" /></Icon></Expand>
      </FormulaBar>

      <Sheet>
        <Grid>
          <colgroup>
            <col width={30} />
            {columns.map(([, w], i) => <col key={i} width={w} />)}
          </colgroup>
          <thead>
            <tr>
              <Corner><Icon w={16} h={18} color="none"><path d="M16 0V18H0Z" fill="#555" /></Icon></Corner>
              {columns.map(([n], i) => (
                <ColHead key={i} scope="col" $on={selectedCols.includes(n)}>{n}</ColHead>
              ))}
            </tr>
          </thead>
          <tbody>{rows.map((n) => <SheetRow key={n} n={n} />)}</tbody>
        </Grid>
        <Canvas>
          <Question>
            <QuestionLine $indent={51}>Using the EMV Approach which course of action should be</QuestionLine>
            <QuestionLine $indent={31}>elected?</QuestionLine>
            <QuestionLine $indent={0} />
            <QuestionLine $indent={55}>What is the value of the selected Decision Node?</QuestionLine>
            <QuestionLine $indent={44}>int: First please insert the data points that are missing.</QuestionLine>
          </Question>
          <Tree />
        </Canvas>
        <ScrollThumb />
      </Sheet>

      <SheetTabs>
        <TabArrows>
          <PlainButton aria-label="Previous sheets"><Icon w={14} h={20} color="none"><path d="M14 0V20L0 10Z" fill="#b0b0b0" /></Icon></PlainButton>
          <PlainButton aria-label="Next sheets"><Icon w={14} h={20} color="none"><path d="M0 0V20L14 10Z" fill="#6d6d6d" /></Icon></PlainButton>
        </TabArrows>
        <SheetTab $fade><span>Problem 5</span></SheetTab>
        <SheetTab>Problem 6</SheetTab>
        <SheetTab>Problem 7</SheetTab>
        <SheetTab>Problem 8</SheetTab>
        <SheetTab>Problem 9</SheetTab>
        <SheetTab $active>Problem 10</SheetTab>
        <AddTab aria-label="Add sheet"><Icon w={22} h={22} color="#b5b5b5" sw={4}><path d="M11 1V21M1 11H21" /></Icon></AddTab>
      </SheetTabs>

      <StatusBar>
        <StatusText>Ready</StatusText>
        <StatusButton>
          <Icon w={34} h={32} color="#fff">
            <circle cx="15" cy="5" r="4" />
            <path d="M2 6C4 11 26 11 28 6M3 9C6 12 10 12 11 14C12 20 8 24 7 30M27 9C24 12 20 12 19 14V17M12 30L15 20M19 19L31 30M31 19L19 30" />
          </Icon>
          Accessibility: Investigate
        </StatusButton>
        <Views>
          <View $on aria-label="Normal view"><Icon w={26} h={26} color="#fff"><path d="M1 1H25V25H1ZM9 1V25M17 1V25M1 9H25M1 17H25" /></Icon></View>
          <View aria-label="Page layout view"><Icon w={28} h={26} color="#fff"><path d="M1 1H27V25H1ZM7 5H21V21H7ZM10 9H18M10 13H18M10 17H18" /></Icon></View>
          <View aria-label="Page break view"><Icon w={28} h={26} color="#fff"><path d="M1 1H27V25H1ZM10 1V15M18 1V15H1" /></Icon></View>
        </Views>
        <Zoom>
          <PlainButton aria-label="Zoom out"><Icon w={18} h={18} color="#fff" sw={4}><path d="M1 9H17" /></Icon></PlainButton>
          <Slider type="range" aria-label="Zoom" min={0} max={100} defaultValue={33} />
          <PlainButton aria-label="Zoom in"><Icon w={18} h={18} color="#fff" sw={4}><path d="M9 1V17M1 9H17" /></Icon></PlainButton>
          <output>70%</output>
        </Zoom>
      </StatusBar>
    </Window>
  );
}
